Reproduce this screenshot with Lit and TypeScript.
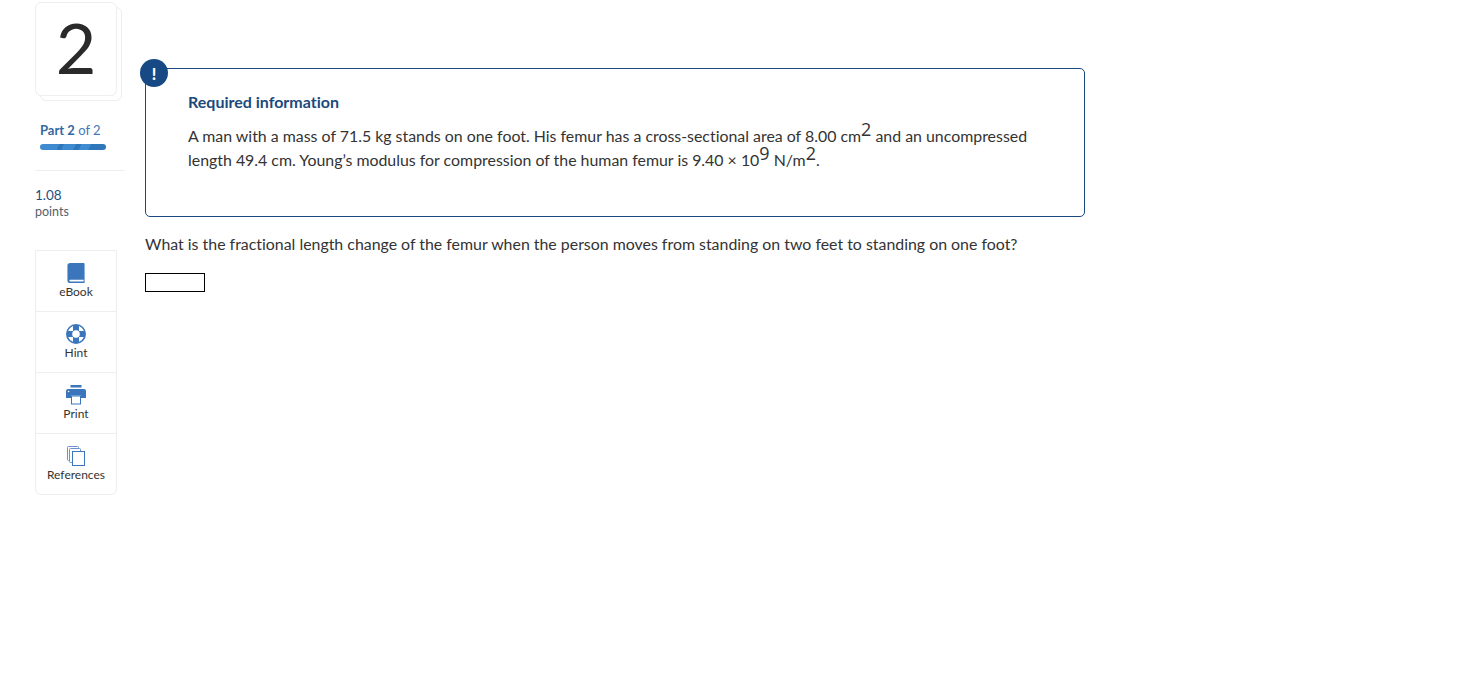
import { LitElement, html, css, svg } from 'lit';
import { customElement } from 'lit/decorators.js';

const bookIcon = svg`<svg width="18" height="21" viewBox="0 0 18 21">
  <path d="M3 0H17a1 1 0 0 1 1 1V21H3a3 3 0 0 1-3-3V3a3 3 0 0 1 3-3Z" fill="#3b76bd"/>
  <path d="M3 17.500H17V19.500H3a1 1 0 0 1 0-2Z" fill="#fff"/>
</svg>`;

const hintIcon = svg`<svg width="20" height="20" viewBox="0 0 20 20">
  <circle cx="10" cy="10" r="9.200" fill="#fff" stroke="#3b76bd" stroke-width="1.600"/>
  <path d="M7 1h6v18H7ZM1 7h18v6H1Z" fill="#3b76bd"/>
  <circle cx="10" cy="10" r="3.800" fill="#fff"/>
</svg>`;

const printIcon = svg`<svg width="20" height="20" viewBox="0 0 20 20">
  <rect x="4.500" y="0" width="11" height="2.500" fill="#3b76bd"/>
  <path d="M2 4H18a2 2 0 0 1 2 2V13H15V10.500H5V13H0V6a2 2 0 0 1 2-2Z" fill="#3b76bd"/>
  <circle cx="2.600" cy="6.500" r=".8" fill="#fff"/>
  <rect x="5.500" y="11" width="9" height="8" fill="#fff" stroke="#3b76bd" stroke-width="1"/>
</svg>`;

const refIcon = svg`<svg width="18" height="20" viewBox="0 0 18 20">
  <rect x=".5" y=".5" width="11" height="14" rx="1" fill="#fff" stroke="#6f8fd0"/>
  <rect x="2.500" y="2.500" width="11" height="14" rx="1" fill="#fff" stroke="#6f8fd0"/>
  <rect x="5.500" y="5.500" width="12" height="14" fill="#fff" stroke="#3b76bd"/>
</svg>`;

const tools = [
  { label: 'eBook', icon: bookIcon },
  { label: 'Hint', icon: hintIcon },
  { label: 'Print', icon: printIcon },
  { label: 'References', icon: refIcon },
];

@customElement('app-root')
export class AppRoot extends LitElement {
  static styles = css`
    :host {
      display: block;
      font-family: 'Lato', 'Liberation Sans', sans-serif;
      font-variant-ligatures: none;
      color: #333;
      background: #fff;
      min-height: 691px;
    }

    .page {
      display: flex;
      align-items: flex-start;
      gap: 20px;
      padding: 2px 0 0 35px;
    }

    .sidebar {
      width: 90px;
      flex: none;
    }

    .number-wrap {
      position: relative;
      width: 82px;
      height: 94px;
    }

    .number-back {
      position: absolute;
      top: 5px;
      left: 5px;
      width: 82px;
      height: 94px;
      box-sizing: border-box;
      border: 1px solid #eeeeee;
      border-radius: 6px;
      background: #fff;
    }

    .number {
      position: relative;
      box-sizing: border-box;
      width: 82px;
      height: 94px;
      display: flex;
      align-items: center;
      justify-content: center;
      padding: 0 0 5px;
      border: 1px solid #eeeeee;
      border-radius: 6px;
      background: #fff;
      font-size: 70px;
      color: #2a2a2a;
    }

    .part {
      margin: 26px 0 0 5px;
      font-size: 13px;
      line-height: 16px;
      color: #3f78bd;
    }

    .part b {
      color: #34689f;
    }

    .progress {
      width: 66px;
      height: 6px;
      margin: 6px 0 0 5px;
      border-radius: 3px;
      background: linear-gradient(115deg, #3f8bd2 0 28%, #2f76bb 28% 35%, #3f8bd2 35% 52%, #2f76bb 52% 60%, #3f8bd2 60% 74%, #2f76bb 74%);
    }

    .divider {
      height: 1px;
      margin-top: 20px;
      background: #eeeeee;
    }

    .score {
      margin-top: 15px;
      font-size: 13.500px;
      line-height: 18px;
      color: #1f4f80;
    }

    .score-label {
      font-size: 12.500px;
      line-height: 16px;
      color: #55606c;
    }

    .tools {
      width: 82px;
      box-sizing: border-box;
      margin-top: 30px;
      border: 1px solid #eeeeee;
      border-radius: 0 0 6px 6px;
    }

    .tool {
      height: 61px;
      box-sizing: border-box;
      display: flex;
      flex-direction: column;
      align-items: center;
      padding-top: 12px;
      border-bottom: 1px solid #eeeeee;
      font-size: 12px;
      line-height: 14px;
      color: #333;
    }

    .tool:last-child {
      border-bottom: none;
      height: 60px;
    }

    .tool svg {
      display: block;
      height: 20px;
      margin-bottom: 2px;
    }

    .main {
      width: 940px;
      padding-top: 66px;
    }

    .alert {
      position: relative;
      box-sizing: border-box;
      height: 149px;
      padding: 23px 42px;
      border: 1px solid #1b4a80;
      border-radius: 5px;
    }

    .badge {
      position: absolute;
      top: -10px;
      left: -6px;
      width: 28px;
      height: 28px;
      display: flex;
      align-items: center;
      justify-content: center;
      border-radius: 50%;
      background: #174a84;
      color: #fff;
      font-size: 16px;
      font-weight: 900;
    }

    .alert-title {
      font-size: 16px;
      line-height: 20px;
      font-weight: 700;
      color: #1c4a7c;
    }

    .alert-body {
      margin-top: 12px;
      font-size: 15.900px;
      line-height: 24px;
    }

    sup {
      font-family: 'Open Sans', sans-serif;
      font-size: 18px;
      line-height: 0;
      vertical-align: baseline;
      position: relative;
      top: -6px;
    }

    .question {
      margin: 15px 0 0;
      font-size: 15.900px;
      line-height: 24px;
    }

    .answer {
      display: block;
      box-sizing: border-box;
      width: 60px;
      height: 19px;
      margin-top: 17px;
      border: 1px solid #000;
      background: #fff;
    }
  `;

  render() {
    return html`
      <div class="page">
        <aside class="sidebar">
          <div class="number-wrap">
            <div class="number-back"></div>
            <div class="number">2</div>
          </div>
          <div class="part"><b>Part 2</b> of 2</div>
          <div class="progress"></div>
          <div class="divider"></div>
          <div class="score">1.08</div>
          <div class="score-label">points</div>
          <div class="tools">
            ${tools.map((t) => html`<div class="tool">${t.icon}<span>${t.label}</span></div>`)}
          </div>
        </aside>
        <main class="main">
          <section class="alert">
            <div class="badge">!</div>
            <div class="alert-title">Required information</div>
            <div class="alert-body">
              A man with a mass of 71.5 kg stands on one foot. His femur has a cross-sectional area of 8.00 cm<sup>2</sup> and an uncompressed
              length 49.4 cm. Young’s modulus for compression of the human femur is 9.40 × 10<sup>9</sup> N/m<sup>2</sup>.
            </div>
          </section>
          <p class="question">What is the fractional length change of the femur when the person moves from standing on two feet to standing on one foot?</p>
          <input class="answer" type="text" />
        </main>
      </div>
    `;
  }
}
